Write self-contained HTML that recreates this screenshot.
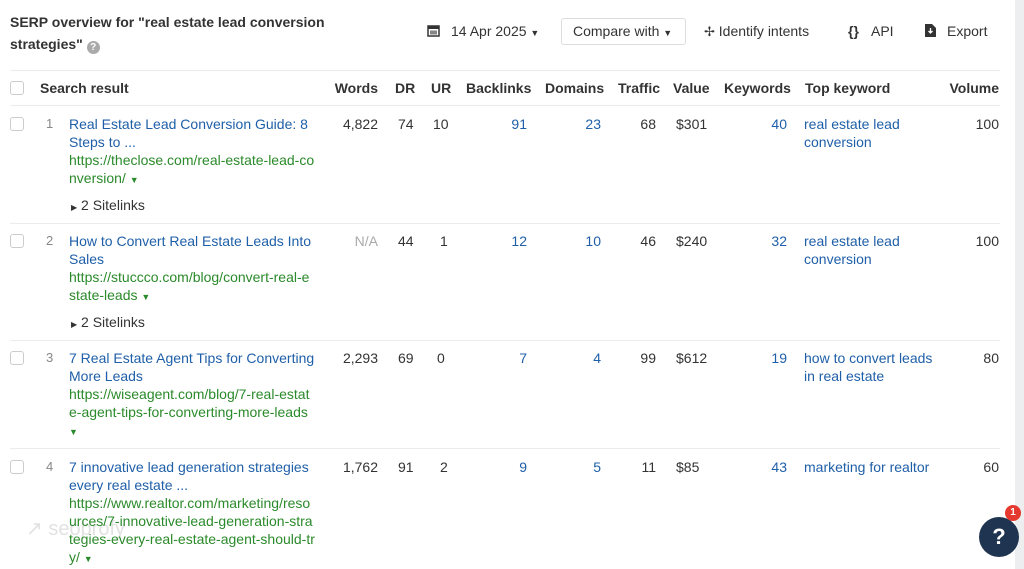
<!DOCTYPE html>
<html><head><meta charset="utf-8"><style>
*{margin:0;padding:0;box-sizing:border-box}
body{width:1024px;height:569px;overflow:hidden;background:#fff;font-family:"Liberation Sans",Arial,sans-serif;font-size:14px;color:#333;position:relative}
.a{position:absolute;white-space:nowrap;line-height:18px}
.r{text-align:right}
.b{font-weight:bold}
.lk{color:#1f5fa8}
.g{color:#2b8a2b}
.hl{position:absolute;left:10px;width:990px;height:1px;background:#ececec}
.cb{position:absolute;left:10px;width:14px;height:14px;border:1px solid #ccc;border-radius:3px;background:#fff}
.n{color:#888;font-size:13px}
.car{font-size:9px}
</style></head><body>
<div style="position:absolute;right:0;top:0;width:9px;height:569px;background:#eceef0"></div>
<div class="a b" style="left:10px;top:11px;font-size:14px;line-height:22px;color:#333">SERP overview for "real estate lead conversion<br>strategies" <span style="display:inline-block;width:13px;height:13px;border-radius:50%;background:#aaa;color:#fff;font-size:10px;line-height:13px;text-align:center;vertical-align:-1px">?</span></div>

<svg class="a" style="left:427px;top:24px" width="13" height="13" viewBox="0 0 13 13"><rect x="1" y="2" width="11" height="10" fill="none" stroke="#333" stroke-width="1.5"/><rect x="1" y="2" width="11" height="3" fill="#333"/><rect x="3" y="6.5" width="7" height="4" fill="#333" opacity=".6"/></svg>
<div class="a" style="left:451px;top:22px">14 Apr 2025 <span class="car">▼</span></div>
<div class="a" style="left:561px;top:18px;width:125px;height:27px;border:1px solid #ddd;border-radius:3px;line-height:25px;padding-left:11px">Compare with <span class="car">▼</span></div>
<div class="a" style="left:704px;top:22px"><span style="font-size:13px">✢</span> Identify intents</div>
<div class="a b" style="left:848px;top:22px">{}</div><div class="a" style="left:871px;top:22px">API</div>
<svg class="a" style="left:925px;top:24px" width="11" height="13" viewBox="0 0 11 13"><path d="M0 0H7L11 4V13H0Z" fill="#333"/><path d="M5.5 4V9M3.5 7L5.5 9L7.5 7" stroke="#fff" stroke-width="1.3" fill="none"/></svg>
<div class="a" style="left:947px;top:22px">Export</div>

<div class="hl" style="top:70px"></div>
<div class="cb" style="top:81px"></div>
<div class="a b" style="left:40px;top:79px">Search result</div>
<div class="a b r" style="left:320px;width:58px;top:79px">Words</div>
<div class="a b" style="left:395px;top:79px">DR</div>
<div class="a b" style="left:431px;top:79px">UR</div>
<div class="a b" style="left:466px;top:79px">Backlinks</div>
<div class="a b" style="left:545px;top:79px">Domains</div>
<div class="a b" style="left:618px;top:79px">Traffic</div>
<div class="a b" style="left:673px;top:79px">Value</div>
<div class="a b" style="left:724px;top:79px">Keywords</div>
<div class="a b" style="left:805px;top:79px">Top keyword</div>
<div class="a b r" style="left:900px;width:99px;top:79px">Volume</div>
<div class="hl" style="top:105px"></div>

<!-- row1 -->
<div class="cb" style="top:117px"></div>
<div class="a n" style="left:46px;top:115px">1</div>
<div class="a lk" style="left:69px;top:115px">Real Estate Lead Conversion Guide: 8<br>Steps to ...</div>
<div class="a g" style="left:69px;top:151px">https://theclose.com/real-estate-lead-co<br>nversion/ <span class="car">▼</span></div>
<div class="a" style="left:71px;top:196px"><span style="font-size:8px">▶</span> 2 Sitelinks</div>
<div class="a r" style="left:320px;width:58px;top:115px">4,822</div>
<div class="a" style="left:398px;top:115px">74</div>
<div class="a" style="left:433px;top:115px">10</div>
<div class="a r lk" style="left:480px;width:47px;top:115px">91</div>
<div class="a r lk" style="left:560px;width:41px;top:115px">23</div>
<div class="a r" style="left:620px;width:36px;top:115px">68</div>
<div class="a" style="left:676px;top:115px">$301</div>
<div class="a r lk" style="left:740px;width:47px;top:115px">40</div>
<div class="a lk" style="left:804px;top:115px">real estate lead<br>conversion</div>
<div class="a r" style="left:940px;width:59px;top:115px">100</div>
<div class="hl" style="top:223px"></div>

<!-- row2 -->
<div class="cb" style="top:234px"></div>
<div class="a n" style="left:46px;top:232px">2</div>
<div class="a lk" style="left:69px;top:232px">How to Convert Real Estate Leads Into<br>Sales</div>
<div class="a g" style="left:69px;top:268px">https://stuccco.com/blog/convert-real-e<br>state-leads <span class="car">▼</span></div>
<div class="a" style="left:71px;top:313px"><span style="font-size:8px">▶</span> 2 Sitelinks</div>
<div class="a r" style="left:320px;width:58px;top:232px;color:#aaa">N/A</div>
<div class="a" style="left:398px;top:232px">44</div>
<div class="a" style="left:440px;top:232px">1</div>
<div class="a r lk" style="left:480px;width:47px;top:232px">12</div>
<div class="a r lk" style="left:560px;width:41px;top:232px">10</div>
<div class="a r" style="left:620px;width:36px;top:232px">46</div>
<div class="a" style="left:676px;top:232px">$240</div>
<div class="a r lk" style="left:740px;width:47px;top:232px">32</div>
<div class="a lk" style="left:804px;top:232px">real estate lead<br>conversion</div>
<div class="a r" style="left:940px;width:59px;top:232px">100</div>
<div class="hl" style="top:340px"></div>

<!-- row3 -->
<div class="cb" style="top:351px"></div>
<div class="a n" style="left:46px;top:349px">3</div>
<div class="a lk" style="left:69px;top:349px">7 Real Estate Agent Tips for Converting<br>More Leads</div>
<div class="a g" style="left:69px;top:385px">https://wiseagent.com/blog/7-real-estat<br>e-agent-tips-for-converting-more-leads<br><span class="car">▼</span></div>
<div class="a r" style="left:320px;width:58px;top:349px">2,293</div>
<div class="a" style="left:398px;top:349px">69</div>
<div class="a" style="left:437px;top:349px">0</div>
<div class="a r lk" style="left:480px;width:47px;top:349px">7</div>
<div class="a r lk" style="left:560px;width:41px;top:349px">4</div>
<div class="a r" style="left:620px;width:36px;top:349px">99</div>
<div class="a" style="left:676px;top:349px">$612</div>
<div class="a r lk" style="left:740px;width:47px;top:349px">19</div>
<div class="a lk" style="left:804px;top:349px">how to convert leads<br>in real estate</div>
<div class="a r" style="left:940px;width:59px;top:349px">80</div>
<div class="hl" style="top:448px"></div>

<!-- row4 -->
<div class="cb" style="top:460px"></div>
<div class="a n" style="left:46px;top:458px">4</div>
<div class="a lk" style="left:69px;top:458px">7 innovative lead generation strategies<br>every real estate ...</div>
<div class="a" style="left:26px;top:520px;color:#e2e2e2;font-size:20px">↗ seoprofy</div>
<div class="a g" style="left:69px;top:494px">https://www.realtor.com/marketing/reso<br>urces/7-innovative-lead-generation-stra<br>tegies-every-real-estate-agent-should-tr<br>y/ <span class="car">▼</span></div>
<div class="a r" style="left:320px;width:58px;top:458px">1,762</div>
<div class="a" style="left:398px;top:458px">91</div>
<div class="a" style="left:440px;top:458px">2</div>
<div class="a r lk" style="left:480px;width:47px;top:458px">9</div>
<div class="a r lk" style="left:560px;width:41px;top:458px">5</div>
<div class="a r" style="left:620px;width:36px;top:458px">11</div>
<div class="a" style="left:676px;top:458px">$85</div>
<div class="a r lk" style="left:740px;width:47px;top:458px">43</div>
<div class="a lk" style="left:804px;top:458px">marketing for realtor</div>
<div class="a r" style="left:940px;width:59px;top:458px">60</div>

<div style="position:absolute;left:979px;top:517px;width:40px;height:40px;border-radius:50%;background:#1f3450;color:#fff;font-size:22px;font-weight:bold;text-align:center;line-height:40px">?</div>
<div style="position:absolute;left:1005px;top:505px;width:16px;height:16px;border-radius:50%;background:#e5392f;color:#fff;font-size:10px;font-weight:bold;text-align:center;line-height:16px">1</div>
</body></html>
